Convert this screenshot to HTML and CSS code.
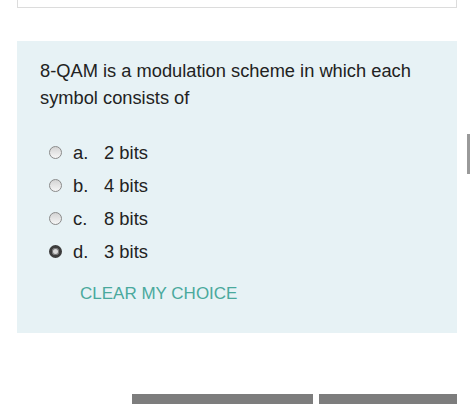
FILE: index.html
```html
<!DOCTYPE html>
<html lang="en">
<head>
	<meta charset="UTF-8">
	<title>Question</title>
	<link rel="stylesheet" href="styles.css">
</head>
<body>
	<div class="prevBox"></div>

	<div class="qBox">
		<p class="qText">8-QAM is a modulation scheme in which each symbol consists of</p>
		<ul class="answers">
			<li><span class="radio"></span><span class="letter">a.</span><span>2 bits</span></li>
			<li><span class="radio"></span><span class="letter">b.</span><span>4 bits</span></li>
			<li><span class="radio"></span><span class="letter">c.</span><span>8 bits</span></li>
			<li><span class="radio checked"></span><span class="letter">d.</span><span>3 bits</span></li>
		</ul>
		<a href="javascript:;" class="clear">Clear my choice</a>
	</div>

	<div class="navBtns">
		<span class="btn btnPrev"></span>
		<span class="btn btnNext"></span>
	</div>

	<span class="scrollThumb"></span>
</body>
</html>
```

FILE: styles.css
```css
* { padding: 0; margin: 0; }
li { list-style: none; }
body { background: #fff; font-family: "Liberation Sans", Arial, sans-serif; color: #222; position: relative; height: 404px; overflow: hidden; }

.prevBox { height: 7px; margin: 0 17px; border: 1px solid #dcdcdc; border-top: none; }

.qBox { margin: 33px 17px 0; height: 292px; background: #e7f2f5; padding: 16px 23px 0; box-sizing: border-box; }
.qText { font-size: 18.3px; line-height: 27px; }

.answers { margin-top: 25px; padding-left: 9px; }
.answers li { display: flex; align-items: center; height: 33px; font-size: 18.4px; }
.answers .letter { width: 31px; }

.radio { width: 13px; height: 13px; border-radius: 50%; border: 1px solid #8a8a8a; background: linear-gradient(#d4d4d4, #f6f6f6); margin-right: 11px; box-sizing: border-box; }
.radio.checked { border: 3px solid #3c3c3c; background: #d8d8d8; box-shadow: inset 0 0 0 1px #777; }

.clear { display: block; margin: 16px 0 0 40px; font-size: 17px; color: #4aa99d; text-decoration: none; text-transform: uppercase; }

.navBtns { display: flex; gap: 6px; justify-content: flex-end; margin: 61px 17px 0 0; }
.btn { height: 20px; background: #7d7d7d; }
.btnPrev { width: 181px; }
.btnNext { width: 138px; }

.scrollThumb { position: absolute; left: 467px; top: 134px; width: 3px; height: 40px; background: #9a9a9a; }
```
